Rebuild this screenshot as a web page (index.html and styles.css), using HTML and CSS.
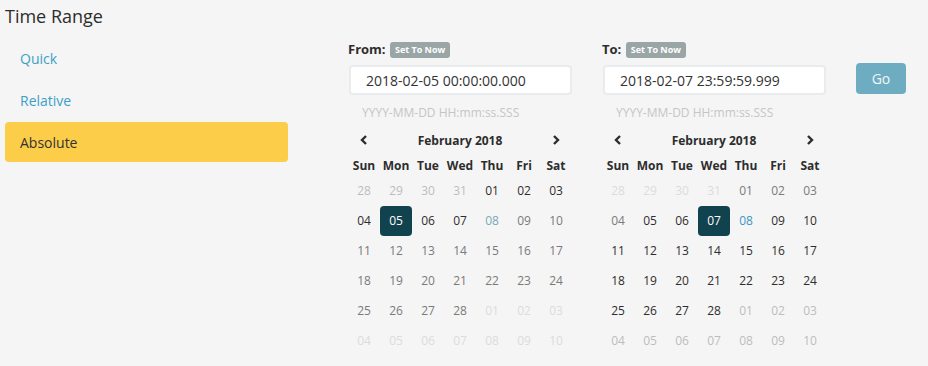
FILE: index.html
```html
<!DOCTYPE html>
<html lang="en">
<head>
  <meta charset="UTF-8" />
  <meta name="viewport" content="width=device-width, initial-scale=1.0"/>
  <title>Time Range</title>
  <link rel="stylesheet" href="styles.css">
</head>
<body>
  <div class="picker">
    <aside class="modes">
      <h2 class="title">Time Range</h2>
      <nav class="mode-list">
        <a class="mode">Quick</a>
        <a class="mode">Relative</a>
        <a class="mode active">Absolute</a>
      </nav>
    </aside>

    <div class="absolute">
      <!-- from -->
      <div class="range-col">
        <div class="range-label">From: <span class="now-btn">Set To Now</span></div>
        <input class="date-input" type="text" value="2018-02-05 00:00:00.000">
        <div class="help">YYYY-MM-DD HH:mm:ss.SSS</div>

        <div class="calendar">
          <div class="cal-head">
            <span class="chev"><svg width="8" height="10" viewBox="0 0 8 10"><path d="M6 1 L2 5 L6 9" /></svg></span>
            <span class="month">February 2018</span>
            <span class="chev"><svg width="8" height="10" viewBox="0 0 8 10"><path d="M2 1 L6 5 L2 9" /></svg></span>
          </div>
          <div class="cal-grid">
            <span class="dow">Sun</span><span class="dow">Mon</span><span class="dow">Tue</span><span class="dow">Wed</span><span class="dow">Thu</span><span class="dow">Fri</span><span class="dow">Sat</span>

            <span class="day other">28</span><span class="day other">29</span><span class="day other">30</span><span class="day other">31</span><span class="day">01</span><span class="day">02</span><span class="day">03</span>
            <span class="day">04</span><span class="day selected">05</span><span class="day">06</span><span class="day">07</span><span class="day today disabled">08</span><span class="day disabled">09</span><span class="day disabled">10</span>
            <span class="day disabled">11</span><span class="day disabled">12</span><span class="day disabled">13</span><span class="day disabled">14</span><span class="day disabled">15</span><span class="day disabled">16</span><span class="day disabled">17</span>
            <span class="day disabled">18</span><span class="day disabled">19</span><span class="day disabled">20</span><span class="day disabled">21</span><span class="day disabled">22</span><span class="day disabled">23</span><span class="day disabled">24</span>
            <span class="day disabled">25</span><span class="day disabled">26</span><span class="day disabled">27</span><span class="day disabled">28</span><span class="day other-off">01</span><span class="day other-off">02</span><span class="day other-off">03</span>
            <span class="day other-off">04</span><span class="day other-off">05</span><span class="day other-off">06</span><span class="day other-off">07</span><span class="day other-off">08</span><span class="day other-off">09</span><span class="day other-off">10</span>
          </div>
        </div>
      </div>

      <!-- to -->
      <div class="range-col">
        <div class="range-label">To: <span class="now-btn">Set To Now</span></div>
        <input class="date-input" type="text" value="2018-02-07 23:59:59.999">
        <div class="help">YYYY-MM-DD HH:mm:ss.SSS</div>

        <div class="calendar">
          <div class="cal-head">
            <span class="chev"><svg width="8" height="10" viewBox="0 0 8 10"><path d="M6 1 L2 5 L6 9" /></svg></span>
            <span class="month">February 2018</span>
            <span class="chev"><svg width="8" height="10" viewBox="0 0 8 10"><path d="M2 1 L6 5 L2 9" /></svg></span>
          </div>
          <div class="cal-grid">
            <span class="dow">Sun</span><span class="dow">Mon</span><span class="dow">Tue</span><span class="dow">Wed</span><span class="dow">Thu</span><span class="dow">Fri</span><span class="dow">Sat</span>

            <span class="day other-off">28</span><span class="day other-off">29</span><span class="day other-off">30</span><span class="day other-off">31</span><span class="day disabled">01</span><span class="day disabled">02</span><span class="day disabled">03</span>
            <span class="day disabled">04</span><span class="day">05</span><span class="day">06</span><span class="day selected">07</span><span class="day today">08</span><span class="day">09</span><span class="day">10</span>
            <span class="day">11</span><span class="day">12</span><span class="day">13</span><span class="day">14</span><span class="day">15</span><span class="day">16</span><span class="day">17</span>
            <span class="day">18</span><span class="day">19</span><span class="day">20</span><span class="day">21</span><span class="day">22</span><span class="day">23</span><span class="day">24</span>
            <span class="day">25</span><span class="day">26</span><span class="day">27</span><span class="day">28</span><span class="day other">01</span><span class="day other">02</span><span class="day other">03</span>
            <span class="day other">04</span><span class="day other">05</span><span class="day other">06</span><span class="day other">07</span><span class="day other">08</span><span class="day other">09</span><span class="day other">10</span>
          </div>
        </div>
      </div>

      <div class="go-col">
        <button class="go-btn" type="button">Go</button>
      </div>
    </div>
  </div>
</body>
</html>
```

FILE: styles.css
```css
body {
  margin: 0;
  padding: 0;
  background: #f5f5f5;
  color: #333;
  font-family: 'Open Sans', sans-serif;
}

.picker {
  display: flex;
  padding: 4px 5px;
}

.modes {
  width: 283px;
  flex: none;
}

.title {
  margin: 0 0 10px;
  font-size: 18px;
  font-weight: normal;
  line-height: 24px;
  color: #2d2d2d;
}

.mode-list {
  display: flex;
  flex-direction: column;
  gap: 2px;
}

.mode {
  display: block;
  height: 40px;
  line-height: 41px;
  padding: 0 15px;
  font-size: 14px;
  color: #3d9fc8;
  border-radius: 4px;
  cursor: pointer;
}

.mode.active {
  background: #fccd48;
  color: #333;
}

.absolute {
  display: flex;
  margin-left: 60px;
  padding-top: 36px;
}

.range-col {
  width: 224px;
  margin-right: 30px;
}

.range-label {
  height: 18px;
  line-height: 18px;
  font-size: 13px;
  font-weight: bold;
  color: #2d2d2d;
}

.now-btn {
  display: inline-block;
  margin-left: 1px;
  padding: 0 5px;
  height: 16px;
  line-height: 16px;
  font-size: 9px;
  font-weight: bold;
  color: #fff;
  background: #9aa5a6;
  border-radius: 3px;
  vertical-align: 1px;
}

.date-input {
  display: block;
  box-sizing: border-box;
  width: 223px;
  height: 30px;
  margin: 7px 0 0 1px;
  padding: 0 15px;
  font-family: 'Open Sans', sans-serif;
  font-size: 14px;
  color: #333;
  background: #fff;
  border: 2px solid #e9ecec;
  border-radius: 4px;
  outline: none;
}

.help {
  margin-top: 8px;
  padding-left: 14px;
  line-height: 20px;
  font-size: 12px;
  color: #c5c5c5;
}

.calendar {
  margin-top: 2px;
  font-size: 12px;
}

.cal-head {
  display: grid;
  grid-template-columns: 32px 1fr 32px;
  height: 30px;
  align-items: center;
  text-align: center;
}

.cal-head .chev svg {
  display: block;
  margin: 0 auto;
  fill: none;
  stroke: #2d2d2d;
  stroke-width: 2.4;
}

.month {
  font-weight: bold;
  color: #2d2d2d;
}

.cal-grid {
  display: grid;
  grid-template-columns: repeat(7, 32px);
  grid-template-rows: 21px;
  grid-auto-rows: 30px;
  text-align: center;
}

.dow {
  line-height: 21px;
  font-weight: bold;
  color: #2d2d2d;
}

.day {
  line-height: 30px;
  color: #2d2d2d;
  border-radius: 4px;
}

.day.disabled {
  color: #7a7a7a;
}

.day.other {
  color: #bdbdbd;
}

.day.other-off {
  color: #dcdcdc;
}

.day.today {
  color: #3a97c0;
}

.day.today.disabled {
  color: #78aab8;
}

.day.selected {
  background: #11434e;
  color: #fff;
}

.go-col {
  padding-top: 23px;
}

.go-btn {
  width: 50px;
  height: 31px;
  padding: 0;
  font-family: 'Open Sans', sans-serif;
  font-size: 14px;
  color: #f2f7f9;
  background: #6eadc1;
  border: none;
  border-radius: 4px;
  cursor: pointer;
}
```
